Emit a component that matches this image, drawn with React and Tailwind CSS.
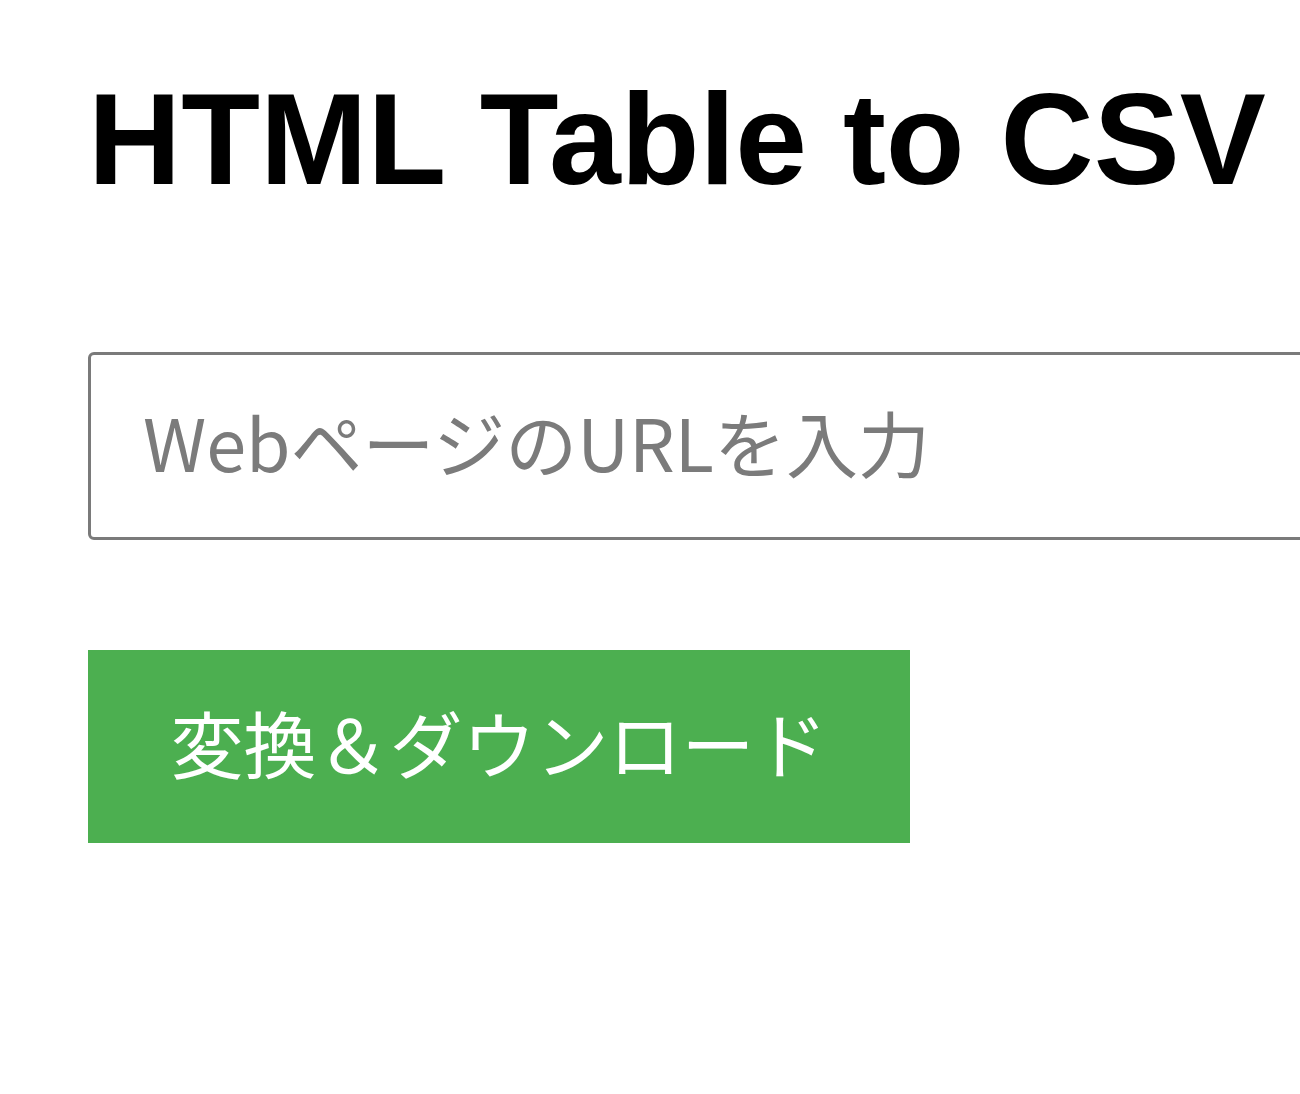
import React, { useState } from "react";

export default function App() {
  const [url, setUrl] = useState("");

  return (
    <div className="w-[1300px] h-[1094px] overflow-hidden bg-white pl-[88px] pt-[75px]">
      <h1 className="text-[129px] leading-none font-bold text-black whitespace-nowrap font-['Liberation_Sans',Arial,sans-serif]">
        HTML Table to CSV
      </h1>

      <input
        type="text"
        value={url}
        onChange={(e) => setUrl(e.target.value)}
        placeholder="WebページのURLを入力"
        className="mt-[148px] block w-[1400px] h-[188px] border-[3px] border-[#7a7a7a] rounded-[6px] pl-[52px] pb-[12px] text-[72px] text-black placeholder:text-[#7b7b7b] outline-none font-['Noto_Sans_CJK_JP',sans-serif]"
      />

      <button className="mt-[110px] flex items-center justify-center w-[822px] h-[193px] pb-[10px] bg-[#4caf50] text-white text-[73px] font-['Noto_Sans_CJK_JP',sans-serif]">
        変換＆ダウンロード
      </button>
    </div>
  );
}
